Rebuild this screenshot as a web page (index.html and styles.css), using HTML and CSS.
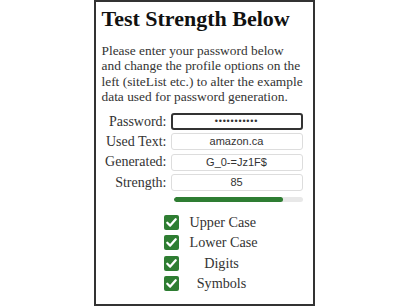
FILE: index.html
```html
<!DOCTYPE html>
<html>
<head>
<meta charset="utf-8">
<link rel="stylesheet" href="styles.css">
</head>
<body>
<div class="panel">
  <h2 class="title">Test Strength Below</h2>
  <p class="intro">Please enter your password below<br>and change the profile options on the<br>left (siteList etc.) to alter the example<br>data used for password generation.</p>
  <div class="form">
    <label class="lbl">Password:</label>
    <div class="field active">•••••••••••</div>
    <label class="lbl">Used Text:</label>
    <div class="field">amazon.ca</div>
    <label class="lbl">Generated:</label>
    <div class="field">G_0-=Jz1F$</div>
    <label class="lbl">Strength:</label>
    <div class="field">85</div>
    <div></div>
    <div class="meter"><div class="fill" style="width:85%"></div></div>
  </div>
  <ul class="checks">
    <li><span class="box"><svg viewBox="0 0 16 16" width="15" height="15"><path d="M3.5 8.2 L6.6 11.3 L12.5 4.6" fill="none" stroke="#fff" stroke-width="2.4" stroke-linecap="round" stroke-linejoin="round"/></svg></span><span class="ctext">Upper Case</span></li>
    <li><span class="box"><svg viewBox="0 0 16 16" width="15" height="15"><path d="M3.5 8.2 L6.6 11.3 L12.5 4.6" fill="none" stroke="#fff" stroke-width="2.4" stroke-linecap="round" stroke-linejoin="round"/></svg></span><span class="ctext">Lower Case</span></li>
    <li><span class="box"><svg viewBox="0 0 16 16" width="15" height="15"><path d="M3.5 8.2 L6.6 11.3 L12.5 4.6" fill="none" stroke="#fff" stroke-width="2.4" stroke-linecap="round" stroke-linejoin="round"/></svg></span><span class="ctext">Digits</span></li>
    <li><span class="box"><svg viewBox="0 0 16 16" width="15" height="15"><path d="M3.5 8.2 L6.6 11.3 L12.5 4.6" fill="none" stroke="#fff" stroke-width="2.4" stroke-linecap="round" stroke-linejoin="round"/></svg></span><span class="ctext">Symbols</span></li>
  </ul>
</div>
</body>
</html>
```
FILE: styles.css
```css
html, body { margin: 0; padding: 0; background: #fff; }
body { width: 408px; height: 306px; overflow: hidden; }
.panel {
  box-sizing: border-box;
  width: 221px;
  height: 306px;
  margin: 0 auto;
  border: 2px solid #333;
  padding: 5px 8px 0 6px;
  font-family: "Liberation Serif", serif;
  color: #333;
}
.title {
  margin: 0;
  font-size: 22px;
  line-height: 24px;
  font-weight: bold;
  color: #111;
  white-space: nowrap;
}
.intro {
  margin: 12px 0 0 0;
  font-size: 13.4px;
  line-height: 15.3px;
  white-space: nowrap;
}
.form {
  margin-top: 9px;
  display: grid;
  grid-template-columns: 65px 132px;
  column-gap: 4px;
  row-gap: 3.3px;
  align-items: center;
}
.lbl {
  text-align: right;
  font-size: 14px;
  white-space: nowrap;
}
.field {
  box-sizing: border-box;
  height: 17px;
  border: 1px solid #ddd;
  border-radius: 3px;
  font-family: "Liberation Sans", Arial, sans-serif;
  font-size: 11px;
  line-height: 15px;
  text-align: center;
  color: #333;
}
.field.active { border: 2px solid #333; line-height: 13px; font-size: 9px; letter-spacing: 0.8px; }
.meter {
  margin-top: 3px;
  margin-left: 3px;
  height: 5px;
  background: #e8e8e8;
  border-radius: 3px;
  overflow: hidden;
}
.fill { height: 100%; background: #2e7d32; border-radius: 3px; }
.checks {
  list-style: none;
  margin: 10px 0 0 0;
  padding: 0 0 0 62px;
}
.checks li {
  display: flex;
  align-items: center;
  height: 20.4px;
}
.box {
  width: 15px; height: 15px;
  background: #2e7d32;
  border-radius: 2px;
  display: flex;
  flex: none;
}
.ctext {
  width: 64px;
  margin-left: 11px;
  text-align: center;
  font-size: 14.2px;
  white-space: nowrap;
}
```
